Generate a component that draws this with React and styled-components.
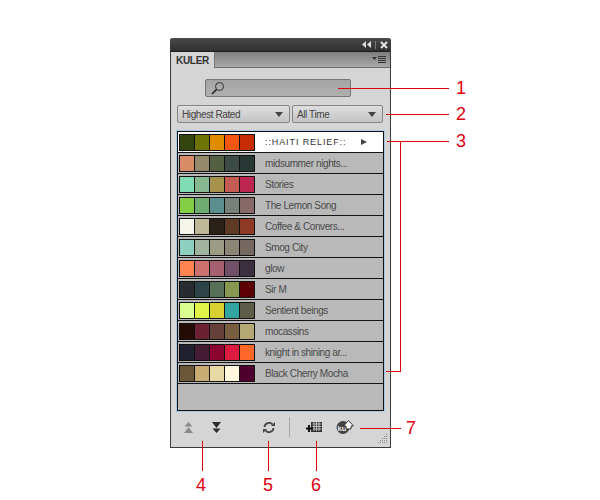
import React from 'react';
import styled, { createGlobalStyle } from 'styled-components';

const Global = createGlobalStyle`
  html, body { margin: 0; padding: 0; background: #fff; }
  * { box-sizing: border-box; }
`;

const Page = styled.div`
  position: relative;
  width: 600px;
  height: 500px;
  padding: 38px 0 0 170px;
  font-family: "Liberation Sans", Arial, sans-serif;
  overflow: hidden;
`;

const Panel = styled.div`
  position: relative;
  width: 221px;
  height: 410px;
  display: flex;
  flex-direction: column;
  background: #d5d5d5;
  border: 1px solid #3a3a3a;
  border-top: 0;
  border-radius: 3px 3px 0 0;
`;

const TitleBar = styled.div`
  height: 13px;
  margin: 0 -1px;
  display: flex;
  align-items: center;
  justify-content: flex-end;
  gap: 4px;
  padding-right: 3px;
  background: linear-gradient(#4a4a4a, #303030);
  border-radius: 3px 3px 0 0;
`;

const TitleDivider = styled.span`
  width: 1px;
  height: 8px;
  background: #777;
`;

const TabRow = styled.div`
  height: 17px;
  display: flex;
  align-items: stretch;
  justify-content: space-between;
  background: linear-gradient(#7e7e7e, #a8a8a8);
  border-top: 1px solid #1e1e1e;
  border-bottom: 1px solid #6e6e6e;
`;

const Tab = styled.div`
  width: 44px;
  margin-bottom: -1px;
  display: flex;
  align-items: center;
  justify-content: center;
  background: #d5d5d5;
  border-right: 1px solid #777;
  color: #333;
  font-size: 10px;
  font-weight: 700;
  letter-spacing: -0.3px;
`;

const MenuButton = styled.div`
  display: flex;
  align-items: center;
  padding-right: 4px;
`;

const Body = styled.div`
  flex: 1;
  display: flex;
  flex-direction: column;
  padding: 11px 6px 0 5px;
`;

const Search = styled.div`
  width: 146px;
  height: 18px;
  margin-left: 29px;
  display: flex;
  align-items: center;
  padding-left: 5px;
  background: linear-gradient(#a4a4a4, #b0b0b0);
  border: 1px solid #757575;
  border-radius: 2px;
`;

const Filters = styled.div`
  display: flex;
  gap: 2px;
  margin: 8px 0 0 1px;
`;

const Select = styled.div`
  width: ${p => p.$width}px;
  height: 18px;
  display: flex;
  align-items: center;
  justify-content: space-between;
  padding: 0 6px 0 4px;
  background: linear-gradient(#dedede, #c4c4c4);
  border: 1px solid #858585;
  border-radius: 2px;
  color: #444;
  font-size: 10px;
  letter-spacing: -0.4px;
`;

const Caret = styled.span`
  width: 0;
  height: 0;
  border-left: 4px solid transparent;
  border-right: 4px solid transparent;
  border-top: 5px solid #444;
`;

const List = styled.div`
  width: 207px;
  height: 280px;
  margin: 8px 0 0 1px;
  background: #b9b9b9;
  border: 1px solid #111;
  outline: 1px solid #a9c8e6;
`;

const Row = styled.div`
  height: 21px;
  display: flex;
  align-items: center;
  padding-left: 1px;
  background: ${p => (p.$selected ? '#fff' : '#b9b9b9')};
  border-bottom: 1px solid #111;
`;

const Swatches = styled.div`
  flex-shrink: 0;
  display: flex;
  width: 76px;
  height: 17px;
  background: #111;
  border: 1px solid #111;
  gap: 1px;
`;

const Swatch = styled.span`
  flex: 1;
  background: ${p => p.$color};
`;

const ThemeName = styled.span`
  margin-left: 10px;
  flex: 1;
  color: ${p => (p.$spaced ? '#333' : '#4a4a4a')};
  white-space: nowrap;
  letter-spacing: ${p => (p.$spaced ? '0.9px' : '-0.4px')};
  font-size: ${p => (p.$spaced ? '9px' : '10px')};
`;

const PlayArrow = styled.span`
  width: 0;
  height: 0;
  margin-right: 16px;
  border-top: 3.5px solid transparent;
  border-bottom: 3.5px solid transparent;
  border-left: 6px solid #444;
`;

const Toolbar = styled.div`
  height: 32px;
  display: flex;
  align-items: center;
  margin: 0 -6px 0 -5px;
`;

const ToolSlot = styled.div`
  width: ${p => p.$width}px;
  margin-left: ${p => p.$gap}px;
  display: flex;
  justify-content: center;
`;

const ToolDivider = styled.span`
  width: 1px;
  height: 20px;
  margin-left: 14px;
  background: #a9a9a9;
`;

const Grip = styled.svg`
  position: absolute;
  right: 2px;
  bottom: 3px;
`;

const Callouts = styled.svg`
  position: absolute;
  inset: 0;
`;

const Num = styled.span`
  position: absolute;
  left: ${p => p.$x}px;
  top: ${p => p.$y}px;
  color: #e2000f;
  font-size: 18px;
  line-height: 18px;
  transform: translateX(-50%);
`;

const themes = [
  { name: '::HAITI RELIEF::', colors: ['#35450f', '#6d7405', '#e08c00', '#f35714', '#c62d07'], selected: true },
  { name: 'midsummer nights...', colors: ['#d98a66', '#95896c', '#545f42', '#3c4a45', '#283834'] },
  { name: 'Stories', colors: ['#7fdcb4', '#86b78f', '#a7924b', '#c45a52', '#bc2650'] },
  { name: 'The Lemon Song', colors: ['#84ce46', '#70ad72', '#5c9090', '#78807a', '#866968'] },
  { name: 'Coffee & Convers...', colors: ['#f5f5ec', '#bfb898', '#2a2118', '#5e3a24', '#8f3a24'] },
  { name: 'Smog City', colors: ['#8dd0c0', '#a0b4a0', '#9c9c84', '#8c8474', '#746860'] },
  { name: 'glow', colors: ['#ff8450', '#cc7070', '#a46070', '#705068', '#3a3040'] },
  { name: 'Sir M', colors: ['#282c30', '#2c4448', '#587058', '#889850', '#5c0004'] },
  { name: 'Sentient beings', colors: ['#d8ff90', '#e0f448', '#d8d030', '#30a4a0', '#5c5c48'] },
  { name: 'mocassins', colors: ['#240c04', '#6c2034', '#644038', '#785c40', '#b4a874'] },
  { name: 'knight in shining ar...', colors: ['#202030', '#441c34', '#8c0430', '#dc1c40', '#ff6828'] },
  { name: 'Black Cherry Mocha', colors: ['#6c5838', '#c8ac74', '#e8d8a4', '#fff8dc', '#50002c'] },
];

const labels = [
  { n: 1, x: 461, y: 79 },
  { n: 2, x: 461, y: 105 },
  { n: 3, x: 461, y: 132 },
  { n: 4, x: 201, y: 476 },
  { n: 5, x: 268, y: 476 },
  { n: 6, x: 316, y: 476 },
  { n: 7, x: 411, y: 419 },
];

function CollapseIcon() {
  return (
    <svg width="9" height="7" viewBox="0 0 9 7" fill="#ddd">
      <path d="M4 0v7L0 3.5zM9 0v7L5 3.5z" />
    </svg>
  );
}

function CloseIcon() {
  return (
    <svg width="8" height="8" viewBox="0 0 8 8" stroke="#e4e4e4" strokeWidth="2">
      <path d="M1 1l6 6M7 1L1 7" />
    </svg>
  );
}

function MenuIcon() {
  return (
    <svg width="14" height="8" viewBox="0 0 14 8">
      <path d="M0 1h5L2.500 4z" fill="#333" />
      <path d="M6 .5h8M6 2.500h8M6 4.500h8M6 6.500h8" stroke="#333" />
    </svg>
  );
}

function SearchIcon() {
  return (
    <svg width="14" height="14" viewBox="0 0 14 14" fill="none">
      <circle cx="8.500" cy="5.500" r="4" stroke="#333" />
      <path d="M5.500 8.500L1 13" stroke="#222" strokeWidth="1.600" />
    </svg>
  );
}

function DoubleArrow({ up, color }) {
  return (
    <svg width="9" height="11" viewBox="0 0 9 11" fill={color}>
      {up
        ? <path d="M4.500 0L8.500 4.500H.5zM4.500 5L9 11H0z" />
        : <path d="M0 0h9L4.500 6zM.5 6.500h8L4.500 11z" />}
    </svg>
  );
}

function RefreshIcon() {
  return (
    <svg width="12" height="11" viewBox="0 0 12 11" fill="none">
      <path d="M1.500 5A4.500 4.500 0 0 1 9.500 2.500" stroke="#444" strokeWidth="1.800" />
      <path d="M10.500 6A4.500 4.500 0 0 1 2.500 8.500" stroke="#444" strokeWidth="1.800" />
      <path d="M8 4h4V0zM4 7H0v4z" fill="#444" />
    </svg>
  );
}

function AddIcon() {
  return (
    <svg width="16" height="10" viewBox="0 0 16 10">
      <path d="M5 0h11v10H5z" fill="#333" />
      <path d="M6.500 2h9M6.500 4.500h9M6.500 7h9M8 0v9M10.500 0v9M13 0v9" stroke="#ddd" strokeWidth=".8" />
      <path d="M3 3v7M0 6.500h7" stroke="#111" strokeWidth="2" />
    </svg>
  );
}

function UploadIcon() {
  return (
    <svg width="18" height="14" viewBox="0 0 18 14">
      <circle cx="7" cy="7.500" r="6.500" fill="#444" />
      <text x="1.500" y="11" fontFamily="Liberation Sans, sans-serif" fontSize="7.500" fontWeight="700" fill="#eee">ku</text>
      <path d="M12.500 .5l5 5.500h-2.500v3h-5V6H7.500z" fill="#fff" stroke="#333" strokeWidth="1" />
    </svg>
  );
}

export default function App() {
  return (
    <Page>
      <Global />
      <Panel>
        <TitleBar>
          <CollapseIcon />
          <TitleDivider />
          <CloseIcon />
        </TitleBar>
        <TabRow>
          <Tab>KULER</Tab>
          <MenuButton><MenuIcon /></MenuButton>
        </TabRow>
        <Body>
          <Search><SearchIcon /></Search>
          <Filters>
            <Select $width={113}>Highest Rated<Caret /></Select>
            <Select $width={91}>All Time<Caret /></Select>
          </Filters>
          <List>
            {themes.map(t => (
              <Row key={t.name} $selected={t.selected}>
                <Swatches>
                  {t.colors.map((c, i) => <Swatch key={i} $color={c} />)}
                </Swatches>
                <ThemeName $spaced={t.selected}>{t.name}</ThemeName>
                {t.selected && <PlayArrow />}
              </Row>
            ))}
          </List>
          <Toolbar>
            <ToolSlot $width={12} $gap={11}><DoubleArrow up color="#8c8c8c" /></ToolSlot>
            <ToolSlot $width={12} $gap={16}><DoubleArrow color="#2c2c2c" /></ToolSlot>
            <ToolSlot $width={12} $gap={41}><RefreshIcon /></ToolSlot>
            <ToolDivider />
            <ToolSlot $width={16} $gap={16}><AddIcon /></ToolSlot>
            <ToolSlot $width={18} $gap={14}><UploadIcon /></ToolSlot>
          </Toolbar>
        </Body>
        <Grip width="11" height="11" viewBox="0 0 11 11" fill="#8a8a8a">
          <path d="M9 1h1v1H9zM7 3h1v1H7zM9 3h1v1H9zM5 5h1v1H5zM7 5h1v1H7zM9 5h1v1H9zM3 7h1v1H3zM5 7h1v1H5zM7 7h1v1H7zM9 7h1v1H9zM1 9h1v1H1zM3 9h1v1H3zM5 9h1v1H5zM7 9h1v1H7zM9 9h1v1H9z" />
        </Grip>
      </Panel>
      <Callouts width="600" height="500" viewBox="0 0 600 500" fill="none" stroke="#e2000f">
        <path d="M338 88.500h111M386 114.500h63M387 141.500h62M400.500 141v231M386 371.500h15M360 428.500h41M202.500 441v30M268.500 441v30M316.500 441v30" />
      </Callouts>
      {labels.map(l => <Num key={l.n} $x={l.x} $y={l.y}>{l.n}</Num>)}
    </Page>
  );
}
